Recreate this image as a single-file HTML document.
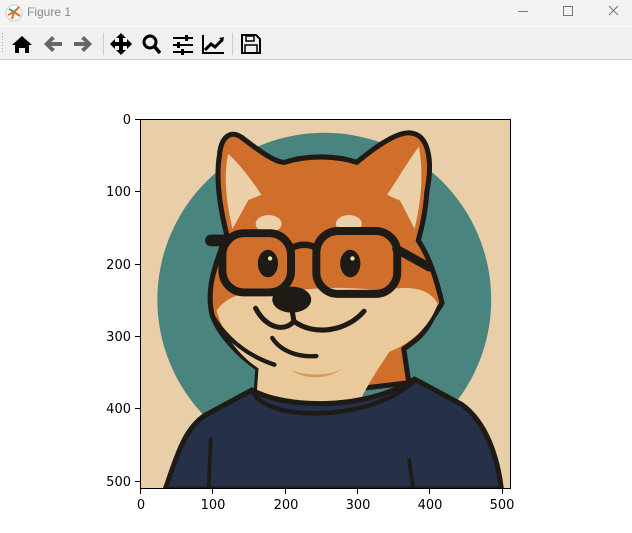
<!DOCTYPE html>
<html><head><meta charset="utf-8"><style>
*{margin:0;padding:0;box-sizing:border-box}
body{width:632px;height:533px;background:#fff;position:relative;overflow:hidden;font-family:"DejaVu Sans","Liberation Sans",sans-serif}
#title{position:absolute;left:0;top:0;width:632px;height:26px;background:#f3f3f3}
#title .t{position:absolute;left:27px;top:5px;font-size:12px;color:#8a8a8a;font-family:"Liberation Sans",sans-serif}
#tb{position:absolute;left:0;top:27px;width:632px;height:33px;background:#f0f0f0;border-bottom:1px solid #c8c8c8}
</style></head><body>
<div id="title">
<svg width="20" height="20" style="position:absolute;left:4px;top:3px" viewBox="0 0 20 20"><circle cx="10" cy="10" r="8" fill="#fff" stroke="#ccc"/><path d="M4 12 L10 9 L15 4 M10 9 L8 16 M10 9 L16 13" stroke="#e07020" stroke-width="2" fill="none"/><path d="M5 6 L10 9" stroke="#3a9" stroke-width="2"/></svg>
<span class="t">Figure 1</span>
<svg width="632" height="26" style="position:absolute;left:0;top:0"><line x1="518" y1="11.5" x2="528" y2="11.5" stroke="#777"/><rect x="563.5" y="6.5" width="9" height="9" fill="none" stroke="#777"/><path d="M609 6 L618 15 M618 6 L609 15" stroke="#777"/></svg>
</div>
<div id="tb">
<svg width="632" height="33" viewBox="0 0 632 33">
<g fill="#aaa"><rect x="2" y="6" width="1" height="1"/><rect x="2" y="9" width="1" height="1"/><rect x="2" y="12" width="1" height="1"/><rect x="2" y="15" width="1" height="1"/><rect x="2" y="18" width="1" height="1"/><rect x="2" y="21" width="1" height="1"/><rect x="2" y="24" width="1" height="1"/></g>
<path d="M12 18 L22 9 L32 18 L29 18 L29 26 L25 26 L25 21 L19 21 L19 26 L15 26 L15 18 Z" fill="#000"/>
<path d="M44 17 L52 9 L55 12 L51 15 L62 15 L62 19 L51 19 L55 22 L52 25 Z" fill="#666"/>
<path d="M92 17 L84 9 L81 12 L85 15 L74 15 L74 19 L85 19 L81 22 L84 25 Z" fill="#666"/>
<rect x="103" y="6" width="1" height="22" fill="#ccc"/>
<path d="M121 6 L126 11 L123 11 L123 15 L127 15 L127 12 L132 17 L127 22 L127 19 L123 19 L123 23 L126 23 L121 28 L116 23 L119 23 L119 19 L115 19 L115 22 L110 17 L115 12 L115 15 L119 15 L119 11 L116 11 Z" fill="#000"/>
<circle cx="150" cy="15" r="6" fill="none" stroke="#000" stroke-width="3"/><line x1="154" y1="19" x2="160" y2="26" stroke="#000" stroke-width="3.5"/>
<g fill="#000"><rect x="173" y="10" width="20" height="2"/><rect x="173" y="17" width="20" height="2"/><rect x="173" y="24" width="20" height="2"/><rect x="185" y="8" width="3" height="6"/><rect x="177" y="15" width="3" height="6"/><rect x="181" y="22" width="3" height="6"/></g>
<path d="M203 8 L203 26 L224 26" fill="none" stroke="#000" stroke-width="2"/><path d="M205 23 L211 17 L215 20 L222 13" fill="none" stroke="#000" stroke-width="3"/><path d="M219 11 L224 10 L223 15 Z" fill="#000"/>
<rect x="232" y="6" width="1" height="22" fill="#ccc"/>
<path d="M242 8 L256 8 L260 12 L260 26 L242 26 Z" fill="none" stroke="#000" stroke-width="2"/><rect x="246" y="9" width="8" height="5" fill="none" stroke="#000" stroke-width="1.5"/><rect x="245" y="18" width="12" height="8" fill="none" stroke="#000" stroke-width="1.5"/>
</svg>
</div>
<svg width="632" height="533" style="position:absolute;left:0;top:0">
<svg x="140" y="119" width="370" height="370" viewBox="0 0 512 512" preserveAspectRatio="none">
<rect width="512" height="512" fill="#e8cfa9"/>
<circle cx="255" cy="250" r="231" fill="#4a847e"/>
<!-- head incl neck -->
<path d="M100 272 C92 240 100 210 120 160 C110 120 105 80 110 50 C112 25 125 15 140 25 C160 40 185 60 200 60 C230 50 270 50 300 60 C330 35 360 15 378 20 C400 25 405 60 397 100 C395 130 390 150 385 168 C400 190 410 220 418 255 L405 275 C395 295 385 305 365 318 L372 365 L160 390 L163 345 C140 330 110 300 100 272 Z" fill="#cf6f2b" stroke="#1e1a16" stroke-width="7" stroke-linejoin="round"/>
<path d="M122 48 C140 65 155 85 168 105 L150 112 L128 152 C118 110 116 75 122 48 Z" fill="#ecd0aa"/>
<path d="M386 38 C370 60 355 85 342 105 L360 113 L380 152 C390 110 392 75 386 38 Z" fill="#ecd0aa"/>
<ellipse cx="178" cy="145" rx="18" ry="12" fill="#ecd0aa"/>
<ellipse cx="289" cy="145" rx="18" ry="12" fill="#ecd0aa"/>
<!-- cream face/neck -->
<path d="M106 265 C125 238 170 232 200 240 C240 232 300 232 330 238 C370 230 400 232 412 256 C400 290 372 312 345 322 C330 345 310 375 300 400 L160 400 L164 345 C140 330 115 300 106 265 Z" fill="#eac99a"/>
<path d="M100 272 C120 305 150 328 186 340" fill="none" stroke="#1e1a16" stroke-width="6" stroke-linecap="round"/>
<path d="M208 347 C230 356 260 356 280 346 C260 360 230 362 208 347 Z" fill="#d49a5e"/>
<!-- sweater -->
<path d="M35 512 C50 470 60 430 90 410 L155 375 C200 400 310 405 380 360 L445 395 C480 420 495 470 500 512 Z" fill="#243148" stroke="#1e1a16" stroke-width="7"/>
<path d="M155 375 C170 420 320 420 380 362" fill="none" stroke="#1e1a16" stroke-width="6"/>
<path d="M95 512 L98 440 M378 512 L372 470" stroke="#1e1a16" stroke-width="5" fill="none"/>
<!-- glasses -->
<path d="M98 168 L118 168" stroke="#1e1a16" stroke-width="16" stroke-linecap="round"/>
<rect x="114" y="158" width="95" height="82" rx="30" fill="none" stroke="#1e1a16" stroke-width="11"/>
<rect x="244" y="155" width="112" height="87" rx="30" fill="none" stroke="#1e1a16" stroke-width="11"/>
<path d="M207 180 C220 172 235 172 246 180" fill="none" stroke="#1e1a16" stroke-width="9"/>
<path d="M355 180 L400 205" stroke="#1e1a16" stroke-width="12" stroke-linecap="round"/>
<!-- eyes -->
<ellipse cx="177" cy="200" rx="14" ry="19" fill="#1e1a16"/><circle cx="180" cy="193" r="3" fill="#f6e0a0"/>
<ellipse cx="291" cy="200" rx="14" ry="19" fill="#1e1a16"/><circle cx="294" cy="193" r="3" fill="#f6e0a0"/>
<!-- nose & mouth -->
<ellipse cx="210" cy="250" rx="27" ry="18" fill="#1e1a16"/>
<path d="M210 262 L213 280 C200 295 175 290 160 262 M213 280 C240 300 285 295 310 266" fill="none" stroke="#1e1a16" stroke-width="7" stroke-linecap="round"/>
<path d="M183 303 C195 322 220 330 244 328" fill="none" stroke="#1e1a16" stroke-width="6" stroke-linecap="round"/>
</svg>
<rect x="140.5" y="119.5" width="370" height="369" fill="none" stroke="#000" stroke-width="1"/>
<g stroke="#000" stroke-width="1">
<line x1="135" y1="119.5" x2="140" y2="119.5"/><line x1="135" y1="191.5" x2="140" y2="191.5"/><line x1="135" y1="264.5" x2="140" y2="264.5"/><line x1="135" y1="336.5" x2="140" y2="336.5"/><line x1="135" y1="408.5" x2="140" y2="408.5"/><line x1="135" y1="481.5" x2="140" y2="481.5"/>
<line x1="140.5" y1="489" x2="140.5" y2="494"/><line x1="212.5" y1="489" x2="212.5" y2="494"/><line x1="285.5" y1="489" x2="285.5" y2="494"/><line x1="357.5" y1="489" x2="357.5" y2="494"/><line x1="429.5" y1="489" x2="429.5" y2="494"/><line x1="502.5" y1="489" x2="502.5" y2="494"/>
</g>
<g font-size="13" font-family="DejaVu Sans,sans-serif" fill="#000" text-anchor="end">
<text x="131" y="124">0</text><text x="131" y="196">100</text><text x="131" y="269">200</text><text x="131" y="341">300</text><text x="131" y="413">400</text><text x="131" y="486">500</text>
</g>
<g font-size="13" font-family="DejaVu Sans,sans-serif" fill="#000" text-anchor="middle">
<text x="141" y="509">0</text><text x="213" y="509">100</text><text x="286" y="509">200</text><text x="358" y="509">300</text><text x="430" y="509">400</text><text x="502" y="509">500</text>
</g>
</svg>
</body></html>
